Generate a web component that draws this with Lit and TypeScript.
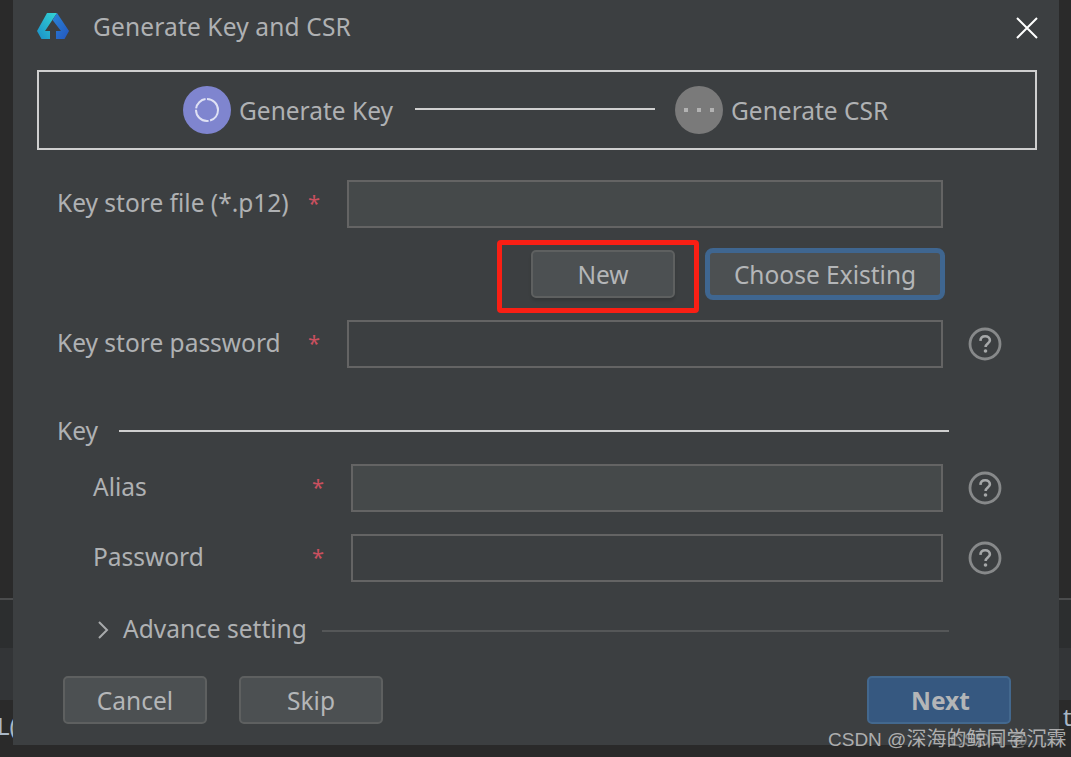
import { LitElement, html, css } from "lit";
import { customElement } from "lit/decorators.js";

const help = html`<svg class="help" width="34" height="34" viewBox="0 0 34 34" fill="none"><circle cx="17" cy="17" r="15" stroke="#87898a" stroke-width="2.8"/><path d="M12.400 13.800c.2-3 2.200-4.500 4.800-4.500 2.800 0 4.700 1.700 4.700 3.900 0 3.300-4.300 3.300-4.300 6.800" stroke="#a6a8a9" stroke-width="2.600"/><circle cx="17.500" cy="24" r="1.800" fill="#a6a8a9"/></svg>`;

@customElement("app-root")
export class AppRoot extends LitElement {
  static styles = css`
    :host { display: block; width: 1071px; height: 757px; background: #2a2a2a; position: relative; overflow: hidden;
      font-family: "Noto Sans", "Noto Sans CJK SC", sans-serif; font-size: 24.5px; color: #afb1b3; }
    .back { position: absolute; left: 0; right: 0; top: 598px; height: 102px; background: linear-gradient(#2c2e2f 0 48px, #333537 48px); border-top: 2px solid #4b4c4d; box-sizing: border-box; }
    .peek { position: absolute; font-size: 24px; color: #a9b7c6; }
    .peek.l { left: -3px; top: 709px; }
    .peek.r { left: 1063px; top: 700px; }
    .dialog { position: relative; margin-left: 13px; width: 1046px; height: 745px; background: #3c3f41; box-sizing: border-box; padding: 0 22px 0 24px; display: flex; flex-direction: column; }
    .title { height: 70px; display: flex; align-items: flex-start; }
    .title svg.logo { margin-top: 13px; flex: none; }
    .title span { margin-left: 24px; margin-top: 10px; line-height: 33px; letter-spacing: .15px; }
    .close { margin-left: auto; margin-top: 17px; margin-right: -1px; }
    .steps { height: 80px; box-sizing: border-box; border: 2px solid #cfcfcf; display: flex; align-items: center; padding-left: 144px; }
    .dot { width: 48px; height: 48px; border-radius: 50%; display: flex; align-items: center; justify-content: center; flex: none; }
    .dot.on { background: #7f85cf; }
    .dot.off { background: #7a7a7a; }
    .step { margin-left: 8px; line-height: 33px; }
    .link { width: 240px; height: 2px; background: #d0d0d0; margin: -3px 20px 0 22px; flex: none; }
    .row { display: flex; align-items: center; height: 48px; }
    .r1 { margin-top: 30px; }
    .label { margin-left: 20px; width: 251px; flex: none; padding-bottom: 4px; }
    .star { color: #c9505f; width: 39px; flex: none; font-size: 22px; padding-bottom: 4px; }
    .input { width: 596px; height: 48px; box-sizing: border-box; border: 2px solid #646464; flex: none; }
    .input.filled { background: #45494a; }
    .help { margin-left: 25px; flex: none; }
    .btns { display: flex; height: 92px; align-items: center; margin-left: 494px; gap: 30px; }
    .btn { box-sizing: border-box; height: 48px; width: 144px; border-radius: 5px; border: 2px solid #5e6060; background: #4c5052; display: flex; align-items: center; justify-content: center; color: #b4b6b8; flex: none; }
    .boxed { position: relative; margin: 0; box-shadow: 0 3px 3px rgba(0,0,0,.12); }
    .boxed::after { content: ""; position: absolute; left: -36px; top: -12px; width: 202px; height: 73px; box-sizing: border-box; border: 5px solid #f91f14; border-radius: 4px; }
    .choose { width: 240px; height: 52px; border-color: #3f6690; border-width: 5px; border-radius: 8px; }
    .keyrow { display: flex; align-items: center; height: 36px; margin-top: 44px; margin-left: 20px; }
    .keyrow .line { flex: none; width: 830px; height: 2px; background: #cfcfcf; margin-left: 21px; margin-top: 2px; }
    .sub .label { margin-left: 56px; width: 219px; }
    .sub .input { width: 592px; }
    .s1 { margin-top: 16px; }
    .s2 { margin-top: 22px; }
    .adv { display: flex; align-items: center; height: 36px; margin-top: 30px; margin-left: 60px; }
    .adv span { margin-left: 12px; white-space: nowrap; padding-bottom: 4px; }
    .adv .line { flex: none; width: 627px; height: 2px; background: #555758; margin-left: 15px; margin-top: 2px; }
    .foot { display: flex; margin-top: 28px; margin-left: 26px; }
    .foot .skip { margin-left: 32px; }
    .next { margin-left: auto; margin-right: 26px; background: #365880; border-color: #43688e; font-weight: 700; color: #b3b5b7; padding-left: 3px; }
    .mark { position: absolute; left: 828px; top: 726px; font-family: "Liberation Sans", "Noto Sans CJK SC", sans-serif; font-size: 20px; line-height: 26px; color: rgba(205,205,205,.8); white-space: nowrap; }
    .mark b { font-weight: 400; font-size: 19px; }
    .mark.ghost { left: 950px; color: rgba(205,205,205,.45); }
  `;
  render() {
    return html`
      <div class="back"></div>
      <span class="peek l">L(</span>
      <span class="peek r">t</span>
      <div class="dialog">
        <div class="title">
          <svg class="logo" width="32" height="26" viewBox="0 0 32 26">
            <defs><linearGradient id="a" x1="0" y1="1" x2="1" y2="0"><stop offset="0" stop-color="#1a8ec8"/><stop offset="1" stop-color="#34d6d4"/></linearGradient>
            <linearGradient id="b" x1="0" y1="0" x2="1" y2="1"><stop offset="0" stop-color="#2a86d8"/><stop offset="1" stop-color="#2456bd"/></linearGradient></defs>
            <path d="M10 0H20L8 18H13V26H4.500L0 18Z" fill="url(#a)"/>
            <path d="M20 0L32 18 27.500 26H19V18H24L15.500 7Z" fill="url(#b)"/>
          </svg>
          <span>Generate Key and CSR</span>
          <svg class="close" width="22" height="22" viewBox="0 0 22 22"><path d="M1 1l20 20M21 1L1 21" stroke="#fff" stroke-width="2"/></svg>
        </div>
        <div class="steps">
          <div class="dot on"><svg width="26" height="26" viewBox="0 0 26 26" fill="none"><circle cx="13" cy="13" r="11" stroke="#dfe1f4" stroke-width="2" stroke-dasharray="14 1.500 19 1.500"/></svg></div>
          <span class="step">Generate Key</span>
          <div class="link"></div>
          <div class="dot off"><svg width="36" height="6" viewBox="0 0 36 6"><rect x="3" y="1" width="4" height="4" fill="#b2b2b2"/><rect x="16" y="1" width="4" height="4" fill="#b2b2b2"/><rect x="29" y="1" width="4" height="4" fill="#b2b2b2"/></svg></div>
          <span class="step">Generate CSR</span>
        </div>
        <div class="row r1"><span class="label">Key store file (*.p12)</span><span class="star">*</span><div class="input filled"></div></div>
        <div class="btns"><div class="btn boxed">New</div><div class="btn choose">Choose Existing</div></div>
        <div class="row"><span class="label">Key store password</span><span class="star">*</span><div class="input"></div>${help}</div>
        <div class="keyrow"><span>Key</span><div class="line"></div></div>
        <div class="row sub s1"><span class="label">Alias</span><span class="star">*</span><div class="input filled"></div>${help}</div>
        <div class="row sub s2"><span class="label">Password</span><span class="star">*</span><div class="input"></div>${help}</div>
        <div class="adv"><svg width="14" height="20" viewBox="0 0 14 20" fill="none"><path d="M2 2l8 8-8 8" stroke="#a8aaac" stroke-width="2"/></svg><span>Advance setting</span><div class="line"></div></div>
        <div class="foot"><div class="btn">Cancel</div><div class="btn skip">Skip</div><div class="btn next">Next</div></div>
      </div>
      <span class="mark ghost"><b>CSDN @</b></span>
      <span class="mark"><b>CSDN @</b>深海的鲸同学沉霖</span>
    `;
  }
}
